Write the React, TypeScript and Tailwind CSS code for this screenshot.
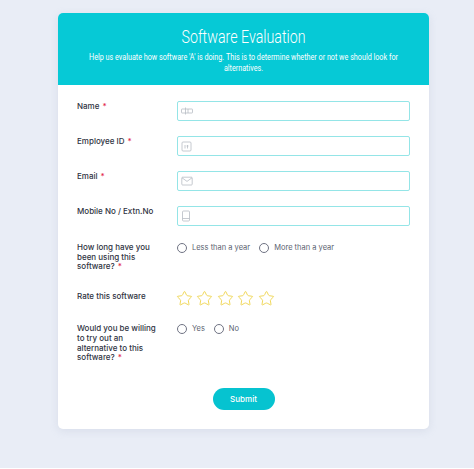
import { Star } from "lucide-react";

const Req = () => <span className="text-[#e11d48] ml-[3px]">*</span>;

const NameIcon = () => (
  <svg width="12" height="12" viewBox="0 0 12 12" fill="none" stroke="#b8bcc4" strokeWidth="0.8">
    <rect x="0.5" y="4" width="11" height="4" rx="0.5" />
    <path d="M4.5 2.5v7M7 4v4" />
  </svg>
);

const IdIcon = () => (
  <svg width="11" height="11" viewBox="0 0 11 11" fill="none" stroke="#b8bcc4" strokeWidth="0.8">
    <rect x="1" y="1" width="9" height="9" rx="1" />
    <path d="M4 4v3.5M6.5 4v3.5M5.5 5h2" />
  </svg>
);

const MailIcon = () => (
  <svg width="12" height="12" viewBox="0 0 12 12" fill="none" stroke="#b8bcc4" strokeWidth="0.8">
    <rect x="0.8" y="2.2" width="10.4" height="7.8" rx="0.8" />
    <path d="M1 2.8 6 6.4l5-3.6" />
  </svg>
);

const PhoneIcon = () => (
  <svg width="10" height="12" viewBox="0 0 10 12" fill="none" stroke="#b8bcc4" strokeWidth="0.8">
    <rect x="1.5" y="1" width="7" height="10" rx="1" />
    <path d="M1.5 8.5h7" />
  </svg>
);

function Label({ children }: { children: React.ReactNode }) {
  return <div className="w-[100px] shrink-0 text-[8px] leading-[9.7px] font-medium text-[#2f3342]">{children}</div>;
}

function InputRow({ label, required, icon, mb }: { label: string; required?: boolean; icon: React.ReactNode; mb: string }) {
  return (
    <div className={`flex ${mb}`}>
      <div className="pt-[1px]">
        <Label>
          {label}
          {required && <Req />}
        </Label>
      </div>
      <div className="h-[20px] w-[233px] flex items-center pl-[3px] rounded-[2px] border-[1.5px] border-[#94e5e7] bg-white">{icon}</div>
    </div>
  );
}

function Radio({ label }: { label: string }) {
  return (
    <label className="flex items-center gap-[5px] text-[7.5px] leading-[10px] text-[#5b5f70]">
      <span className="w-[10px] h-[10px] rounded-full border border-[#6f7383] bg-white" />
      {label}
    </label>
  );
}

export default function App() {
  return (
    <div className="h-[468px] w-[474px] overflow-hidden bg-[#e9edf6] pt-[13px] pl-[58px]" style={{ fontFamily: "Inter, sans-serif" }}>
      <div className="w-[371px] h-[416px] rounded-[5px] bg-white overflow-hidden shadow-[0_2px_8px_rgba(150,160,190,0.2)]">
        <div className="h-[72px] bg-[#06c9d6] text-white text-center pt-[14px] overflow-hidden" style={{ fontFamily: "Roboto, sans-serif" }}>
          <h1 className="text-[18px] leading-[20px] font-light scale-x-[0.79]">Software Evaluation</h1>
          <p className="mt-[5px] -mx-[20px] text-[9px] leading-[11px] scale-x-[0.8]">
            Help us evaluate how software 'A' is doing. This is to determine whether or not we should look for
            <br />
            alternatives.
          </p>
        </div>
        <div className="pl-[19px] pt-[16px]">
          <InputRow label="Name" required icon={<NameIcon />} mb="mb-[15px]" />
          <InputRow label="Employee ID" required icon={<IdIcon />} mb="mb-[15px]" />
          <InputRow label="Email" required icon={<MailIcon />} mb="mb-[15px]" />
          <InputRow label="Mobile No / Extn.No" icon={<PhoneIcon />} mb="mb-[17px]" />
          <div className="flex items-start mb-[18px]">
            <Label>
              How long have you
              <br />
              been using this
              <br />
              software?
              <Req />
            </Label>
            <div className="flex gap-[9px]">
              <Radio label="Less than a year" />
              <Radio label="More than a year" />
            </div>
          </div>
          <div className="flex mb-[17px] items-start">
            <div className="pt-[2px]">
              <Label>Rate this software</Label>
            </div>
            <div className="flex gap-[3.4px] -ml-[1px]">
              {[0, 1, 2, 3, 4].map((i) => (
                <Star key={i} size={17} strokeWidth={1.4} className="text-[#f0d85a]" />
              ))}
            </div>
          </div>
          <div className="flex items-start">
            <Label>
              Would you be willing
              <br />
              to try out an
              <br />
              alternative to this
              <br />
              software?
              <Req />
            </Label>
            <div className="flex gap-[9px]">
              <Radio label="Yes" />
              <Radio label="No" />
            </div>
          </div>
        </div>
        <div className="flex justify-center mt-[25px]">
          <button className="w-[62px] h-[22px] rounded-full bg-[#06c3d0] text-white text-[8px] font-medium">Submit</button>
        </div>
      </div>
    </div>
  );
}
